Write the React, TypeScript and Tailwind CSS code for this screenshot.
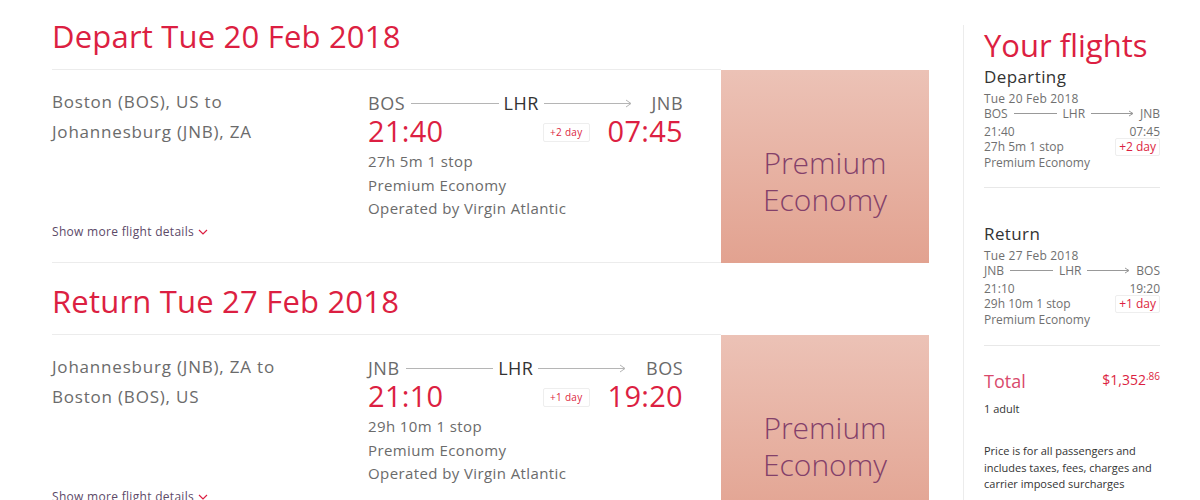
import React from "react";

const RED = "text-[#dc1f42]";

function RouteLine({ from, via, to }: { from: string; via: string; to: string }) {
  return (
    <div className="flex items-center text-[18px] leading-[20px] tracking-[0.5px] text-[#6a6a6a]">
      <span>{from}</span>
      <span className="ml-[6px] mr-[5px] h-px flex-1 bg-[#b5b5b5]" />
      <span className="text-[#333]">{via}</span>
      <span className="ml-[5px] flex flex-1 items-center">
        <span className="h-px flex-1 bg-[#b5b5b5]" />
        <svg width="7" height="9" viewBox="0 0 7 9" className="-ml-[6px]">
          <path d="M1 1 L6 4.5 L1 8" fill="none" stroke="#b5b5b5" strokeWidth="1" />
        </svg>
      </span>
      <span className="ml-[20px]">{to}</span>
    </div>
  );
}

function SmallRoute({ from, via, to }: { from: string; via: string; to: string }) {
  return (
    <div className="flex items-center text-[12px] leading-[15px] text-[#707070]">
      <span>{from}</span>
      <span className="mx-[6px] h-px flex-1 bg-[#999]" />
      <span>{via}</span>
      <span className="ml-[6px] flex flex-1 items-center">
        <span className="h-px flex-1 bg-[#999]" />
        <svg width="6" height="7" viewBox="0 0 6 7" className="-ml-[5px]">
          <path d="M1 1 L5 3.5 L1 6" fill="none" stroke="#999" strokeWidth="1" />
        </svg>
      </span>
      <span className="ml-[6px]">{to}</span>
    </div>
  );
}

function Section({
  title,
  cityA,
  cityB,
  from,
  to,
  dep,
  arr,
  plus,
  dur,
  headH,
}: {
  title: string;
  cityA: string;
  cityB: string;
  from: string;
  to: string;
  dep: string;
  arr: string;
  plus: string;
  dur: string;
  headH: string;
}) {
  return (
    <div>
      <div className={`${headH} flex items-end pb-[15px]`}>
        <h1 className={`text-[31px] leading-[36px] ${RED} tracking-[0.2px]`}>{title}</h1>
      </div>
      <div className="flex">
        <div className="flex h-[194px] w-[669px] border-y border-[#ececec]">
          <div className="flex w-[316px] flex-col pt-[17px]">
            <div className="text-[17px] leading-[30px] tracking-[0.8px] text-[#6b6b6b]">
              <div>{cityA}</div>
              <div>{cityB}</div>
            </div>
            <div className="mt-auto mb-[21px] flex items-center text-[12px] tracking-[0.3px] text-[#5c4a68]">
              Show more flight details
              <svg width="10" height="7" viewBox="0 0 10 7" className="ml-[4px]">
                <path d="M1 1 L5 5 L9 1" fill="none" stroke="#dc1f42" strokeWidth="1.2" />
              </svg>
            </div>
          </div>
          <div className="w-[315px] pt-[23px]">
            <RouteLine from={from} via="LHR" to={to} />
            <div className="mt-[2px] flex items-center text-[29px] leading-[32px] tracking-[0.3px] text-[#dc1f42]">
              <span>{dep}</span>
              <span className="ml-auto mr-[18px] mt-[2px] rounded-[2px] border border-[#eee] px-[6px] text-[10px] leading-[17px] text-[#dc1f42]">
                {plus}
              </span>
              <span>{arr}</span>
            </div>
            <div className="mt-[3px] text-[15px] leading-[23.5px] tracking-[0.4px] text-[#6b6b6b]">
              <div>{dur}</div>
              <div>Premium Economy</div>
              <div>Operated by Virgin Atlantic</div>
            </div>
          </div>
        </div>
        <div className="mt-px flex h-[193px] w-[208px] justify-center bg-gradient-to-b from-[#ecc2b6] to-[#e2a290] pt-[74px] text-center text-[30px] leading-[37px] font-light text-[#83406a]">
          <div>
            Premium
            <br />
            Economy
          </div>
        </div>
      </div>
    </div>
  );
}

function SideFlight({
  label,
  date,
  from,
  to,
  dep,
  arr,
  dur,
  plus,
}: {
  label: string;
  date: string;
  from: string;
  to: string;
  dep: string;
  arr: string;
  dur: string;
  plus: string;
}) {
  return (
    <div>
      <div className="text-[17px] leading-[20px] tracking-[0.4px] text-[#333]">{label}</div>
      <div className="mt-[5px] text-[12px] leading-[14px] tracking-[0.2px] text-[#707070]">{date}</div>
      <SmallRoute from={from} via="LHR" to={to} />
      <div className="mt-[3px] flex justify-between text-[12px] leading-[15px] text-[#707070]">
        <span>{dep}</span>
        <span>{arr}</span>
      </div>
      <div className="flex items-start justify-between text-[12px] leading-[16px] text-[#707070]">
        <div>
          <div>{dur}</div>
          <div>Premium Economy</div>
        </div>
        <span className="-mt-[1px] rounded-[2px] border border-[#eee] px-[3px] text-[12px] leading-[16px] text-[#dc1f42]">
          {plus}
        </span>
      </div>
    </div>
  );
}

export default function App() {
  return (
    <div
      className="flex h-[500px] w-[1200px] overflow-hidden bg-white"
      style={{ fontFamily: '"Open Sans", "DejaVu Sans", sans-serif' }}
    >
      <div className="ml-[52px] w-[877px]">
        <Section
          title="Depart Tue 20 Feb 2018"
          cityA="Boston (BOS), US to"
          cityB="Johannesburg (JNB), ZA"
          from="BOS"
          to="JNB"
          dep="21:40"
          arr="07:45"
          plus="+2 day"
          dur="27h 5m 1 stop"
          headH="h-[69px]"
        />
        <Section
          title="Return Tue 27 Feb 2018"
          cityA="Johannesburg (JNB), ZA to"
          cityB="Boston (BOS), US"
          from="JNB"
          to="BOS"
          dep="21:10"
          arr="19:20"
          plus="+1 day"
          dur="29h 10m 1 stop"
          headH="h-[71px]"
        />
      </div>
      <div className="ml-[34px] mt-[25px] w-[197px] border-l border-[#ececec] pl-[20px]">
        <div className="w-[176px]">
          <div className="pt-[2px] text-[31px] leading-[36px] text-[#dc1f42]">Your flights</div>
          <div className="mt-[4px]">
            <SideFlight
              label="Departing"
              date="Tue 20 Feb 2018"
              from="BOS"
              to="JNB"
              dep="21:40"
              arr="07:45"
              dur="27h 5m 1 stop"
              plus="+2 day"
            />
          </div>
          <div className="mt-[16px] border-t border-[#e8e8e8]" />
          <div className="mt-[36px]">
            <SideFlight
              label="Return"
              date="Tue 27 Feb 2018"
              from="JNB"
              to="BOS"
              dep="21:10"
              arr="19:20"
              dur="29h 10m 1 stop"
              plus="+1 day"
            />
          </div>
          <div className="mt-[17px] border-t border-[#e8e8e8]" />
          <div className="mt-[24px] flex items-start justify-between">
            <span className="text-[18px] leading-[22px] text-[#d94a6c]">Total</span>
            <span className="mt-[1px] text-[14px] leading-[18px] text-[#dc1f42]">
              $1,352<sup className="text-[10px]">.86</sup>
            </span>
          </div>
          <div className="mt-[10px] text-[11px] leading-[14px] text-[#333]">1 adult</div>
          <div className="mt-[27px] text-[11px] leading-[16.5px] text-[#333]">
            Price is for all passengers and includes taxes, fees, charges and carrier imposed surcharges
          </div>
        </div>
      </div>
    </div>
  );
}
